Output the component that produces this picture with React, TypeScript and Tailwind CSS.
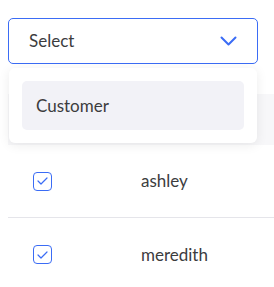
import React from "react";

function Check() {
  return (
    <div className="w-[19px] h-[19px] rounded-[4px] border border-[#3b6cf5] flex items-center justify-center">
      <svg width="11" height="8" viewBox="0 0 11 8" fill="none">
        <path d="M1 4l3 3 6-6" stroke="#3b6cf5" strokeWidth="1.2" strokeLinecap="round" strokeLinejoin="round" />
      </svg>
    </div>
  );
}

export default function App() {
  const rows = ["ashley", "meredith"];
  return (
    <div className="w-[274px] h-[287px] bg-white overflow-hidden relative" style={{ fontFamily: "Lato, 'Noto Sans', sans-serif" }}>
      <div className="pt-[18px] pl-[8px]">
        <div className="w-[250px] h-[46px] border border-[#3b6cf5] rounded-[5px] flex items-center justify-between pl-[20px] pr-[20px] bg-white">
          <span className="text-[17px] text-[#3c3c3e]">Select</span>
          <svg width="17" height="10" viewBox="0 0 17 10" fill="none">
            <path d="M1.5 1.5l7 7 7-7" stroke="#3b6cf5" strokeWidth="2" strokeLinecap="round" strokeLinejoin="round" />
          </svg>
        </div>
      </div>
      <div className="mt-[30px] ml-[8px] w-[300px]">
        <div className="h-[51px] bg-[#f7f7f9]" />
        {rows.map((r, i) => (
          <div key={r} className={`h-[73px] flex items-center ${i === 0 ? "border-b border-[#e5e5ea]" : ""}`}>
            <div className="w-[133px] pl-[25px]">
              <Check />
            </div>
            <span className="text-[17px] text-[#3c3c3e]">{r}</span>
          </div>
        ))}
      </div>
      <div className="absolute left-[9px] top-[68px] w-[248px] h-[75px] bg-white rounded-[6px] shadow-[0_2px_12px_rgba(0,0,0,0.08)] px-[13px] pt-[13px]">
        <div className="h-[49px] rounded-[5px] bg-[#f2f2f7] flex items-center pl-[14px]">
          <span className="text-[17px] text-[#3c3c3e]">Customer</span>
        </div>
      </div>
    </div>
  );
}
